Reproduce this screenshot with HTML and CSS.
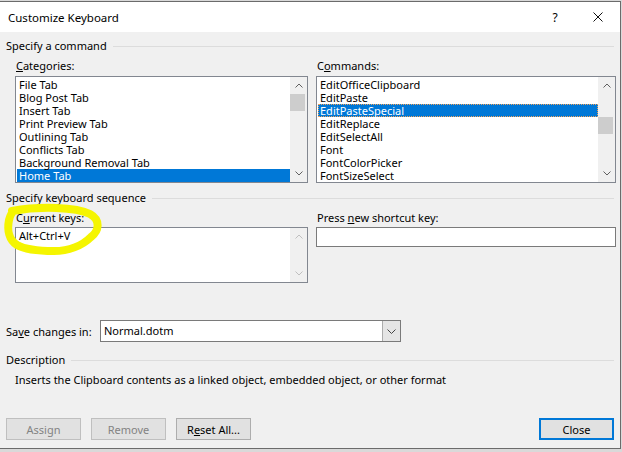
FILE: index.html
```html
<!DOCTYPE html>
<html lang="en">
<head>
    <meta charset="UTF-8">
    <title>Customize Keyboard</title>
    <link rel="stylesheet" href="styles.css">
</head>
<body>
    <div class="window">
        <div class="titlebar">
            <span class="title">Customize Keyboard</span>
            <span class="cap-btn help">?</span>
            <span class="cap-btn close">
                <svg width="10" height="10" viewBox="0 0 10 10"><path d="M0.5 0.5 L9.5 9.5 M9.5 0.5 L0.5 9.5" stroke="#111" stroke-width="1" fill="none"/></svg>
            </span>
        </div>

        <div class="content">
            <!-- Specify a command -->
            <div class="group-head first"><span>Specify a command</span><div class="rule"></div></div>
            <div class="pair">
                <div class="field">
                    <div class="label"><u>C</u>ategories:</div>
                    <div class="listbox tall">
                        <div class="items">
                            <div class="item">File Tab</div>
                            <div class="item">Blog Post Tab</div>
                            <div class="item">Insert Tab</div>
                            <div class="item">Print Preview Tab</div>
                            <div class="item">Outlining Tab</div>
                            <div class="item">Conflicts Tab</div>
                            <div class="item">Background Removal Tab</div>
                            <div class="item selected">Home Tab</div>
                        </div>
                        <div class="vscroll">
                            <div class="arrow"><svg width="8" height="5" viewBox="0 0 8 5"><path d="M0.5 4.5 L4 1 L7.5 4.5" stroke="#606060" fill="none"/></svg></div>
                            <div class="track"><div class="thumb"></div></div>
                            <div class="arrow"><svg width="8" height="5" viewBox="0 0 8 5"><path d="M0.5 0.5 L4 4 L7.5 0.5" stroke="#606060" fill="none"/></svg></div>
                        </div>
                    </div>
                </div>
                <div class="field">
                    <div class="label">C<u>o</u>mmands:</div>
                    <div class="listbox tall">
                        <div class="items">
                            <div class="item">EditOfficeClipboard</div>
                            <div class="item">EditPaste</div>
                            <div class="item selected focused">EditPasteSpecial</div>
                            <div class="item">EditReplace</div>
                            <div class="item">EditSelectAll</div>
                            <div class="item">Font</div>
                            <div class="item">FontColorPicker</div>
                            <div class="item">FontSizeSelect</div>
                        </div>
                        <div class="vscroll">
                            <div class="arrow"><svg width="8" height="5" viewBox="0 0 8 5"><path d="M0.5 4.5 L4 1 L7.5 4.5" stroke="#606060" fill="none"/></svg></div>
                            <div class="track"><div class="thumb lower"></div></div>
                            <div class="arrow"><svg width="8" height="5" viewBox="0 0 8 5"><path d="M0.5 0.5 L4 4 L7.5 0.5" stroke="#606060" fill="none"/></svg></div>
                        </div>
                    </div>
                </div>
            </div>

            <!-- Specify keyboard sequence -->
            <div class="group-head second"><span>Specify keyboard sequence</span><div class="rule"></div></div>
            <div class="pair keys">
                <div class="field">
                    <div class="label">C<u>u</u>rrent keys:</div>
                    <div class="listbox short">
                        <div class="items">
                            <div class="item">Alt+Ctrl+V</div>
                        </div>
                        <div class="vscroll disabled">
                            <div class="arrow"><svg width="8" height="5" viewBox="0 0 8 5"><path d="M0.5 4.5 L4 1 L7.5 4.5" stroke="#bfbfbf" fill="none"/></svg></div>
                            <div class="track"></div>
                            <div class="arrow"><svg width="8" height="5" viewBox="0 0 8 5"><path d="M0.5 0.5 L4 4 L7.5 0.5" stroke="#bfbfbf" fill="none"/></svg></div>
                        </div>
                    </div>
                </div>
                <div class="field">
                    <div class="label">Press <u>n</u>ew shortcut key:</div>
                    <div class="textbox"></div>
                </div>
            </div>

            <div class="save-row">
                <span class="save-label">Sa<u>v</u>e changes in:</span>
                <div class="select">
                    <span class="select-value">Normal.dotm</span>
                    <span class="select-btn"><svg width="9" height="5" viewBox="0 0 9 5"><path d="M0.5 0.5 L4.5 4.5 L8.5 0.5" stroke="#444" fill="none"/></svg></span>
                </div>
            </div>

            <!-- Description -->
            <div class="group-head third"><span>Description</span><div class="rule"></div></div>
            <p class="desc">Inserts the Clipboard contents as a linked object, embedded object, or other format</p>

            <div class="button-row">
                <button class="btn" disabled>Assign</button>
                <button class="btn" disabled>Remove</button>
                <button class="btn">R<u>e</u>set All...</button>
                <button class="btn default">Close</button>
            </div>
        </div>

        <!-- highlighter mark -->
        <svg class="marker" width="120" height="60" viewBox="0 0 120 60">
            <path d="M12 10 C40 5, 76 6, 90 13 C101 19, 99 30, 91 36 C82 45, 68 50, 54 50 C38 50, 24 48, 17 44 C9 39, 7 29, 9 19 C10 15, 11 12, 14 10" stroke="#f5f500" stroke-width="8" fill="none" stroke-linecap="round"/>
        </svg>
    </div>
</body>
</html>
```

FILE: styles.css
```css
body {
    margin: 0;
    background-color: #d9d9d9;
    font-family: "Noto Sans", sans-serif;
    font-size: 11px;
    color: #000;
}

.window {
    position: relative;
    width: 620px;
    height: 446px;
    margin-top: 1px;
    border-top: 1px solid #6b6b6b;
    border-right: 1px solid #6b6b6b;
    border-bottom: 1px solid #6b6b6b;
    background-color: #f0f0f0;
    display: flex;
    flex-direction: column;
}

.titlebar {
    height: 30px;
    background-color: #fff;
    display: flex;
    align-items: center;
    padding-left: 8px;
    font-size: 11.5px;
}

.title {
    flex: 1;
}

.cap-btn {
    width: 46px;
    text-align: center;
    display: flex;
    justify-content: center;
    align-items: center;
}

.help {
    font-size: 12px;
    padding-left: 4px;
    box-sizing: border-box;
}

.close {
    width: 44px;
}

.content {
    flex: 1;
    padding: 0 6px;
}

.group-head {
    height: 16px;
    line-height: 16px;
    display: flex;
    align-items: center;
}

.group-head .rule {
    flex: 1;
    height: 1px;
    background-color: #dcdcdc;
    margin-left: 6px;
}

.group-head.first { margin-top: 6px; }
.group-head.second { margin-top: 7px; }
.group-head.third { margin-top: 10px; }

.pair {
    display: grid;
    grid-template-columns: 293px 300px;
    column-gap: 8px;
    margin-left: 9px;
    margin-top: 4px;
}

.label {
    height: 16px;
    line-height: 16px;
    padding-left: 1px;
    margin-bottom: 2px;
}

.keys .label {
    margin-bottom: 1px;
}

.listbox {
    box-sizing: border-box;
    border: 1px solid #828790;
    background-color: #fff;
    display: flex;
}

.listbox.tall { height: 107px; }
.listbox.short { height: 56px; }

.items {
    flex: 1;
    padding: 1px 0 0 1px;
}

.item {
    height: 13px;
    line-height: 13px;
    padding-left: 2px;
    white-space: nowrap;
}

.item.selected {
    background-color: #0078d7;
    color: #fff;
}

.item.focused {
    box-sizing: border-box;
    border: 1px dotted #f2a35a;
    padding-left: 1px;
    line-height: 11px;
}

.vscroll {
    width: 17px;
    background-color: #f0f0f0;
    display: flex;
    flex-direction: column;
}

.vscroll .arrow {
    height: 17px;
    display: flex;
    justify-content: center;
    align-items: center;
}

.vscroll .track {
    flex: 1;
}

.thumb {
    height: 17px;
    margin: 0 2px 0 0;
    background-color: #cdcdcd;
}

.thumb.lower {
    margin-top: 23px;
}

.textbox {
    box-sizing: border-box;
    height: 20px;
    border: 1px solid #7a7a7a;
    background-color: #fff;
}

.save-row {
    display: flex;
    align-items: center;
    margin-top: 37px;
}

.save-label {
    width: 94px;
}

.select {
    box-sizing: border-box;
    width: 301px;
    height: 22px;
    border: 1px solid #7a7a7a;
    background-color: #fff;
    display: flex;
}

.select-value {
    flex: 1;
    padding-left: 3px;
    line-height: 20px;
}

.select-btn {
    width: 17px;
    background-color: #e5e5e5;
    border-left: 1px solid #acacac;
    display: flex;
    justify-content: center;
    align-items: center;
}

.desc {
    margin: 4px 0 0 9px;
    height: 16px;
    line-height: 16px;
}

.button-row {
    display: flex;
    gap: 10px;
    margin-top: 30px;
}

.btn {
    box-sizing: border-box;
    width: 75px;
    height: 22px;
    padding: 0;
    font-family: "Noto Sans", sans-serif;
    font-size: 11px;
    color: #000;
    background-color: #e1e1e1;
    border: 1px solid #adadad;
}

.btn:disabled {
    color: #838383;
    border-color: #bfbfbf;
}

.btn.default {
    margin-left: auto;
    border: 2px solid #0078d7;
}

.marker {
    position: absolute;
    left: 0;
    top: 199px;
}
```
